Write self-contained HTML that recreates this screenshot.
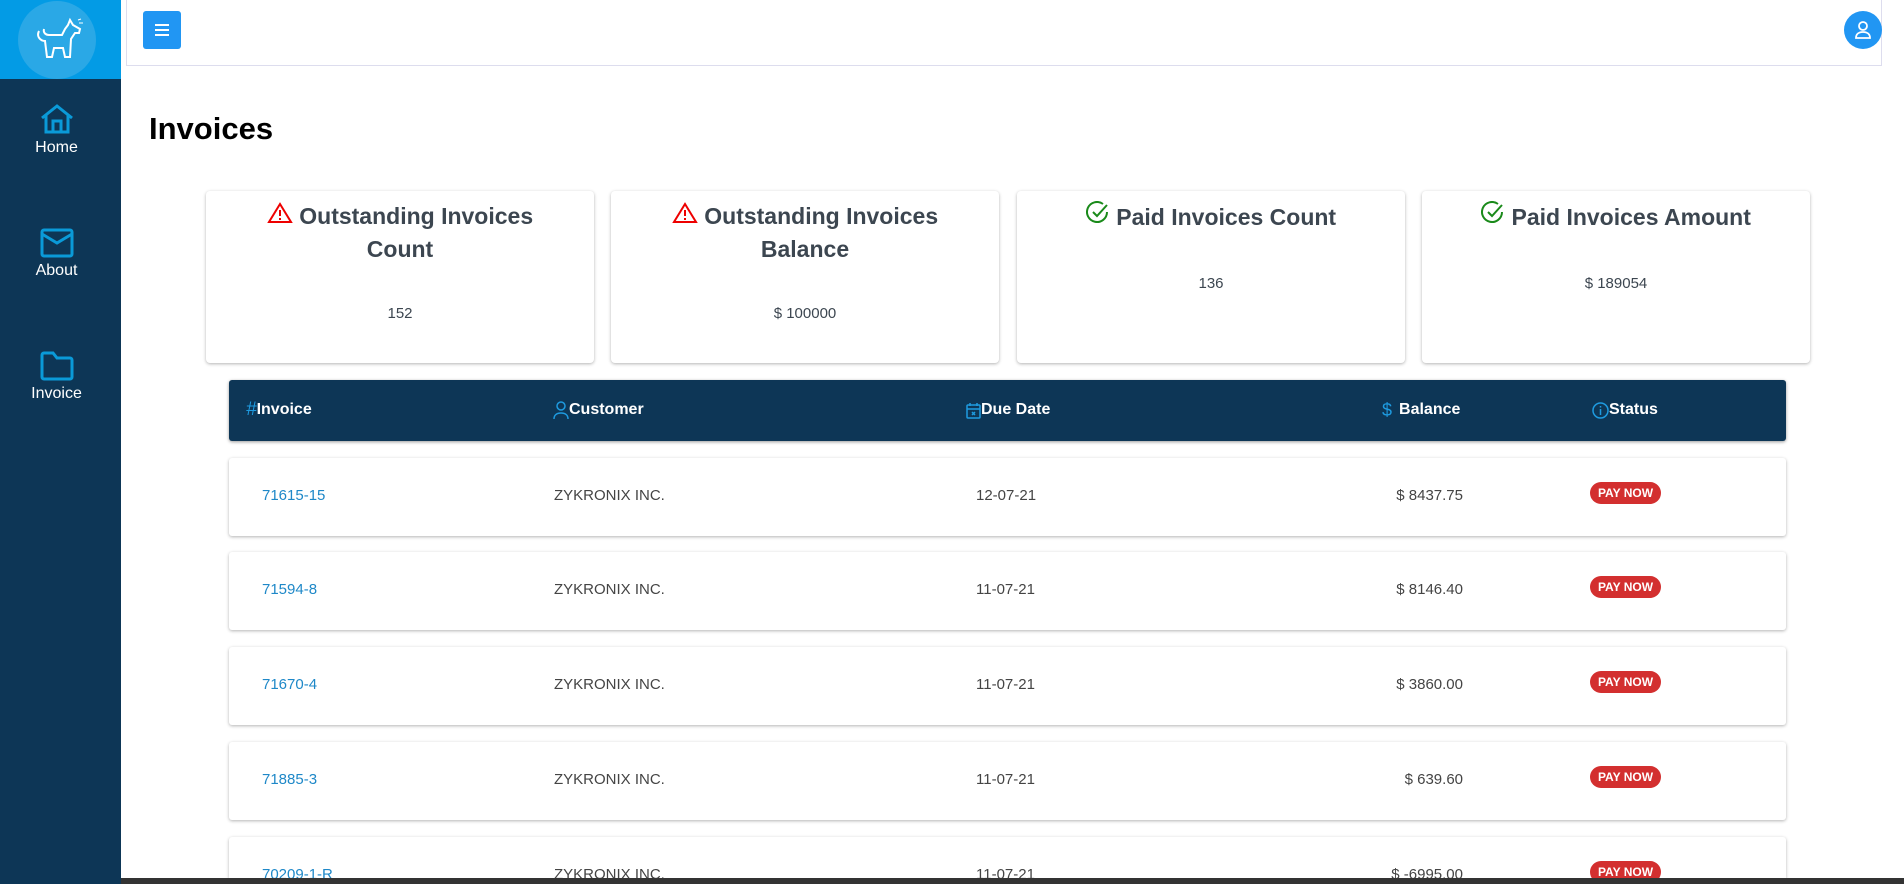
<!DOCTYPE html>
<html><head><meta charset="utf-8"><style>
*{box-sizing:border-box;margin:0;padding:0}
html{width:1904px;height:884px;overflow:hidden}
body{width:1904px;height:884px;overflow:hidden;background:#fff;font-family:"Liberation Sans",sans-serif;position:relative}
.side{position:absolute;left:0;top:0;width:121px;height:884px;background:#0d3656}
.logo{position:absolute;left:0;top:0;width:121px;height:79px;background:#039be5}
.logo .c{position:absolute;left:18px;top:1px;width:78px;height:78px;border-radius:50%;background:#2aa8e6}
.nav{position:absolute;left:-4px;width:121px;text-align:center;color:#fff;font-size:16px}
.nav svg{display:block;margin:0 auto 4px}
.top{position:absolute;left:126px;top:0;width:1756px;height:66px;border:1px solid #dde;border-top:none;background:#fff}
.ham{position:absolute;left:143px;top:11px;width:38px;height:38px;background:#2196f3;border-radius:3px}
.ham i{position:absolute;left:12px;width:14px;height:2px;background:#fff}
.av{position:absolute;left:1844px;top:11px;width:38px;height:38px;border-radius:50%;background:#2196f3}
h1{position:absolute;left:149px;top:111px;font-size:31px;font-weight:bold;color:#000}
.card{position:absolute;top:191px;width:388px;height:172px;background:#fff;border-radius:4px;box-shadow:0 1px 3px rgba(0,0,0,.3);text-align:center;color:#3c4650}
.card .t{font-size:23px;font-weight:bold;line-height:33px;margin-top:1px}
.card .v{font-size:15px;position:absolute;left:0;right:0}
.th{position:absolute;left:229px;top:380px;width:1557px;height:61px;background:#0d3656;border-radius:3px;box-shadow:0 1px 3px rgba(0,0,0,.4);color:#fff;font-weight:bold;font-size:16px}
.th span{position:absolute;top:19px;height:22px;display:flex;align-items:center}
.row{position:absolute;left:229px;width:1557px;height:78px;background:#fff;border-radius:3px;box-shadow:0 1px 3px rgba(0,0,0,.3);font-size:15px;color:#444}
.row span{position:absolute;top:29px}
.btn{position:absolute;left:1361px;top:24px;width:71px;height:22px;border-radius:11px;background:#d32f2f;color:#fff;font-size:12px;font-weight:bold;text-align:center;line-height:22px}
.bar{position:absolute;left:121px;top:878px;width:1783px;height:6px;background:#333}
</style></head><body>
<div class="side">
<div class="logo"><div class="c"></div>
<svg style="position:absolute;left:35px;top:17px" width="50" height="44" viewBox="0 0 50 44" fill="none" stroke="#fff" stroke-width="2"><path d="M4 14c-3 6 2 10 6 10l2 16h5l2-9h9l2 9h5l1-18 4-6h4l1-4-7-4-3-5-2 5-3 4-3 6H14c-3 0-6-2-5-6"/><path d="M43 3l3-1M44 6h4" stroke-width="1"/></svg></div>
<div class="nav" style="top:103px"><svg width="34" height="32" viewBox="0 0 34 32" fill="none" stroke="#0a9ad8" stroke-width="3"><path d="M2 15L17 3l15 12M6 12v17h22V12M13 29V18h8v11"/></svg>Home</div>
<div class="nav" style="top:228px"><svg width="34" height="30" viewBox="0 0 34 30" fill="none" stroke="#0a9ad8" stroke-width="3"><rect x="2" y="2" width="30" height="26" rx="2"/><path d="M2 6l15 9 15-9"/></svg>About</div>
<div class="nav" style="top:351px"><svg width="34" height="30" viewBox="0 0 34 30" fill="none" stroke="#0a9ad8" stroke-width="3"><path d="M2 4a2 2 0 012-2h9l4 5h13a2 2 0 012 2v17a2 2 0 01-2 2H4a2 2 0 01-2-2z"/></svg>Invoice</div>
</div>
<div class="top"></div>
<div class="ham"><i style="top:13px"></i><i style="top:18px"></i><i style="top:23px"></i></div>
<div class="av"><svg width="38" height="38" viewBox="0 0 38 38" fill="none" stroke="#fff" stroke-width="1.8"><circle cx="19" cy="15" r="4"/><path d="M12 27c0-4 3-6 7-6s7 2 7 6z"/></svg></div>
<h1>Invoices</h1>

<div class="card" style="left:206px"><div class="t" style="padding-top:8px"><svg width="26" height="22" viewBox="0 0 26 22" fill="none" stroke="#e00" stroke-width="2"><path d="M13 2L24 20H2z"/><path d="M13 8v6M13 16v2"/></svg> Outstanding Invoices<br>Count</div><div class="v" style="top:114px">152</div></div>
<div class="card" style="left:611px"><div class="t" style="padding-top:8px"><svg width="26" height="22" viewBox="0 0 26 22" fill="none" stroke="#e00" stroke-width="2"><path d="M13 2L24 20H2z"/><path d="M13 8v6M13 16v2"/></svg> Outstanding Invoices<br>Balance</div><div class="v" style="top:114px">$ 100000</div></div>
<div class="card" style="left:1017px"><div class="t" style="padding-top:9px"><svg width="24" height="24" viewBox="0 0 24 24" fill="none" stroke="#1a8a1a" stroke-width="2"><path d="M21 11a10 10 0 11-4-8"/><path d="M7 11l4 4 10-11"/></svg> Paid Invoices Count</div><div class="v" style="top:84px">136</div></div>
<div class="card" style="left:1422px"><div class="t" style="padding-top:9px"><svg width="24" height="24" viewBox="0 0 24 24" fill="none" stroke="#1a8a1a" stroke-width="2"><path d="M21 11a10 10 0 11-4-8"/><path d="M7 11l4 4 10-11"/></svg> Paid Invoices Amount</div><div class="v" style="top:84px">$ 189054</div></div>

<div class="th">
<span style="left:17px"><b style="color:#1e9be0;font-weight:normal;font-style:italic;font-size:19px">#</b>Invoice</span>
<span style="left:324px"><svg width="16" height="18" viewBox="0 0 16 18" fill="none" stroke="#1e9be0" stroke-width="1.5"><circle cx="8" cy="5" r="4"/><path d="M1 18c0-4 3-6 7-6s7 2 7 6"/></svg>Customer</span>
<span style="left:737px"><svg width="15" height="17" viewBox="0 0 15 17" fill="none" stroke="#1e9be0" stroke-width="1.5"><rect x="1" y="3" width="13" height="13" rx="1"/><path d="M1 7h13M4 1v3M11 1v3M6 10l3 3M9 10l-3 3"/></svg>Due Date</span>
<span style="left:1153px"><b style="color:#1e9be0;font-weight:normal;font-size:18px;margin-right:7px">$</b>Balance</span>
<span style="left:1363px"><svg width="17" height="17" viewBox="0 0 17 17" fill="none" stroke="#1e9be0" stroke-width="1.5"><circle cx="8.5" cy="8.5" r="7.5"/><path d="M8.5 7v6M8.5 4v1.5"/></svg>Status</span>
</div>

<div class="row" style="top:458px"><span style="left:33px;color:#1e88c8">71615-15</span><span style="left:325px">ZYKRONIX INC.</span><span style="left:747px">12-07-21</span><span style="right:323px">$ 8437.75</span><div class="btn">PAY NOW</div></div>
<div class="row" style="top:552px"><span style="left:33px;color:#1e88c8">71594-8</span><span style="left:325px">ZYKRONIX INC.</span><span style="left:747px">11-07-21</span><span style="right:323px">$ 8146.40</span><div class="btn">PAY NOW</div></div>
<div class="row" style="top:647px"><span style="left:33px;color:#1e88c8">71670-4</span><span style="left:325px">ZYKRONIX INC.</span><span style="left:747px">11-07-21</span><span style="right:323px">$ 3860.00</span><div class="btn">PAY NOW</div></div>
<div class="row" style="top:742px"><span style="left:33px;color:#1e88c8">71885-3</span><span style="left:325px">ZYKRONIX INC.</span><span style="left:747px">11-07-21</span><span style="right:323px">$ 639.60</span><div class="btn">PAY NOW</div></div>
<div class="row" style="top:837px;height:41px;border-radius:3px 3px 0 0"><span style="left:33px;color:#1e88c8">70209-1-R</span><span style="left:325px">ZYKRONIX INC.</span><span style="left:747px">11-07-21</span><span style="right:323px">$ -6995.00</span><div class="btn">PAY NOW</div></div>
<div class="bar"></div>
</body></html>
